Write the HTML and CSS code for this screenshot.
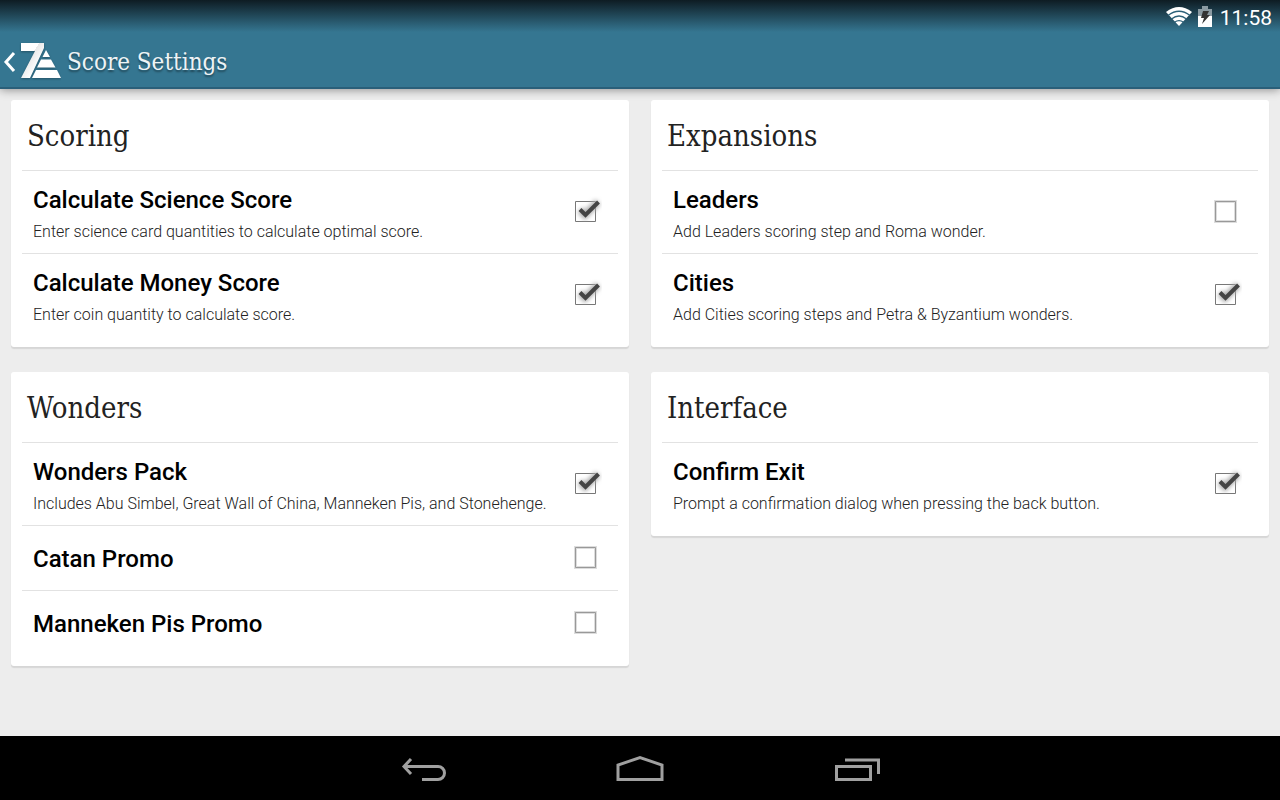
FILE: index.html
```html
<!DOCTYPE html>
<html lang="en">
<head>
  <meta charset="UTF-8">
  <meta name="viewport" content="width=device-width, initial-scale=1.0">
  <title>Score Settings</title>
  <link rel="stylesheet" href="styles.css">
</head>
<body>
  <header class="top">
    <div class="status-bar">
      <svg class="wifi" viewBox="0 0 26 20" width="26" height="20" aria-label="Wi-Fi">
        <path d="M13 19 0 5Q13-5 26 5Z" fill="#fff"/>
        <path d="M2 8.5Q13 0 24 8.5M5.500 12Q13 6 20.500 12M8.500 15.200Q13 12 17.500 15.200" fill="none" stroke="#2c6078" stroke-width="1.300"/>
      </svg>
      <svg class="battery" viewBox="0 0 14 21" width="14" height="21" aria-label="Battery">
        <path d="M4 0h6v3h4v7H0V3h4z" fill="#8a9aa2"/>
        <path d="M0 10h14v11H0z" fill="#fff"/>
        <path d="M5 5h6L9 9h3L4 18l2-6H3z" fill="#333"/>
      </svg>
      <span class="clock">11:58</span>
    </div>
    <div class="action-bar">
      <button class="up" type="button" aria-label="Navigate up">
        <svg viewBox="0 0 61 50" width="61" height="50">
          <defs>
            <linearGradient id="shade" x2="1" y2="1">
              <stop offset="0.4" stop-color="#fff"/>
              <stop offset="0.4" stop-color="#e9e9e9"/>
              <stop offset="0.7" stop-color="#fff"/>
            </linearGradient>
          </defs>
          <path d="M14 18 6 27l8 9" fill="none" stroke="#fff" stroke-width="3"/>
          <g class="logo">
            <path d="M21 8h23v5L30 43h-9l14-27H21z" fill="url(#shade)"/>
            <path d="M46 15l4 7h-7.500zM41 24.500h10l4.500 8H37zM36 35h21l4 8H32z"/>
          </g>
        </svg>
      </button>
      <h1>Score Settings</h1>
    </div>
  </header>

  <main class="settings">
    <div class="column">
      <section class="card">
        <h2>Scoring</h2>
        <label class="row">
          <span class="text">
            <span class="title">Calculate Science Score</span>
            <span class="summary">Enter science card quantities to calculate optimal score.</span>
          </span>
          <input type="checkbox" checked>
        </label>
        <label class="row">
          <span class="text">
            <span class="title">Calculate Money Score</span>
            <span class="summary">Enter coin quantity to calculate score.</span>
          </span>
          <input type="checkbox" checked>
        </label>
      </section>

      <section class="card">
        <h2>Wonders</h2>
        <label class="row">
          <span class="text">
            <span class="title">Wonders Pack</span>
            <span class="summary">Includes Abu Simbel, Great Wall of China, Manneken Pis, and Stonehenge.</span>
          </span>
          <input type="checkbox" checked>
        </label>
        <label class="row single">
          <span class="text">
            <span class="title">Catan Promo</span>
          </span>
          <input type="checkbox">
        </label>
        <label class="row single">
          <span class="text">
            <span class="title">Manneken Pis Promo</span>
          </span>
          <input type="checkbox">
        </label>
      </section>
    </div>

    <div class="column">
      <section class="card">
        <h2>Expansions</h2>
        <label class="row">
          <span class="text">
            <span class="title">Leaders</span>
            <span class="summary">Add Leaders scoring step and Roma wonder.</span>
          </span>
          <input type="checkbox">
        </label>
        <label class="row">
          <span class="text">
            <span class="title">Cities</span>
            <span class="summary">Add Cities scoring steps and Petra &amp; Byzantium wonders.</span>
          </span>
          <input type="checkbox" checked>
        </label>
      </section>

      <section class="card">
        <h2>Interface</h2>
        <label class="row">
          <span class="text">
            <span class="title">Confirm Exit</span>
            <span class="summary">Prompt a confirmation dialog when pressing the back button.</span>
          </span>
          <input type="checkbox" checked>
        </label>
      </section>
    </div>
  </main>

  <nav class="nav-bar">
    <button type="button" aria-label="Back">
      <svg viewBox="0 0 60 40" width="60" height="40">
        <path d="M18 11l-7 7.500 7 7.500M11 18.500h34a6.500 6.500 0 0 1 0 13H29"/>
      </svg>
    </button>
    <button type="button" aria-label="Home">
      <svg viewBox="0 0 60 40" width="60" height="40">
        <path d="M8 31.500V17L30 9.500 52 17v14.500z"/>
      </svg>
    </button>
    <button type="button" aria-label="Recent apps">
      <svg viewBox="0 0 60 40" width="60" height="40">
        <path d="M9.500 18.500h34v13h-34zM18 12h33.500v14"/>
      </svg>
    </button>
  </nav>
</body>
</html>
```
FILE: styles.css
```css
:root {
  --bar-color: #357691;
  --page-color: #ededed;
  --line-color: #e2e2e2;
  --nav-icon: #a0a0a0;
}

* {
  box-sizing: border-box;
}

body {
  margin: 0;
  min-height: 100vh;
  display: flex;
  flex-direction: column;
  font-family: Roboto, sans-serif;
  background: var(--page-color);
  color: #000;
}

button {
  padding: 0;
  border: none;
  background: none;
  cursor: pointer;
}

svg {
  display: block;
}

.top {
  background: linear-gradient(#0e1c23, rgba(53, 118, 145, 0) 32px) var(--bar-color);
  border-bottom: 2px solid #2a5f79;
  box-shadow: 0 1px 9px rgba(0, 0, 0, 0.4);
  color: #fff;
}

.status-bar {
  display: flex;
  justify-content: flex-end;
  align-items: center;
  gap: 8px;
  height: 33px;
  padding-right: 8px;
}

.wifi {
  margin-right: -2px;
}

.clock {
  font-size: 21px;
  line-height: 24px;
  padding-top: 2px;
}

.action-bar {
  display: flex;
  align-items: center;
  gap: 6px;
  height: 54px;
}

.logo {
  fill: #fff;
  filter: drop-shadow(0 1px 1px rgba(0, 0, 0, 0.3));
}

h1, h2 {
  margin: 0;
  font-family: "Roboto Slab", "DejaVu Serif Condensed", serif;
  font-weight: 300;
}

h1 {
  padding-top: 4px;
  font-size: 24px;
  color: #eef3f5;
  text-shadow: 0 2px 2px rgba(0, 0, 0, 0.4);
}

.settings {
  flex: 1;
  display: grid;
  grid-template-columns: 1fr 1fr;
  align-items: start;
  gap: 22px;
  padding: 11px;
}

.column {
  display: flex;
  flex-direction: column;
  gap: 25px;
}

.card {
  padding: 0 11px 11px;
  background: #fff;
  border-radius: 3px;
  box-shadow: 0 2px 1px #d6d6d6;
}

h2 {
  padding: 3px 5px 0;
  font-size: 29px;
  line-height: 67px;
  color: #222;
}

.row {
  display: flex;
  align-items: center;
  justify-content: space-between;
  min-height: 83px;
  padding: 0 16px 0 11px;
  border-top: 1px solid var(--line-color);
}

.text {
  display: flex;
  flex-direction: column;
  gap: 6px;
  padding-top: 5px;
}

.single {
  min-height: 65px;
}

.single .text {
  padding-top: 2px;
}

.title {
  font-size: 24px;
  font-weight: 500;
  line-height: 28px;
}

.summary {
  font-size: 16px;
  font-weight: 300;
  line-height: 24px;
  color: #222;
}

input {
  appearance: none;
  flex: none;
  width: 32px;
  height: 32px;
  margin: 0;
  background: url("data:image/svg+xml,%3Csvg xmlns='http://www.w3.org/2000/svg' width='32' height='32' fill='none'%3E%3Cpath d='M5.500 5.500h20v20h-20z' stroke='%23ddd' stroke-width='3'/%3E%3Cpath d='M5.500 5.500h20v20h-20z' stroke='%23999'/%3E%3C/svg%3E");
}

input:checked {
  background-image: url("data:image/svg+xml,%3Csvg xmlns='http://www.w3.org/2000/svg' width='32' height='32' fill='none'%3E%3Cdefs%3E%3Cfilter id='b' x='-50%25' y='-50%25' width='200%25' height='200%25'%3E%3CfeGaussianBlur stdDeviation='2'/%3E%3C/filter%3E%3C/defs%3E%3Cpath d='M5.500 5.500h20v20h-20z' stroke='%23777'/%3E%3Cpath d='M10 14l5 5L28 6' stroke='%23aaa' stroke-width='7' filter='url(%23b)'/%3E%3Cpath d='M10 13.500l5.500 5.500L28.500 6' stroke='%23444' stroke-width='4'/%3E%3C/svg%3E");
}

.nav-bar {
  display: flex;
  justify-content: center;
  gap: 157px;
  padding: 12px 0;
  background: #000;
}

.nav-bar path {
  fill: none;
  stroke: var(--nav-icon);
  stroke-width: 3;
}
```
